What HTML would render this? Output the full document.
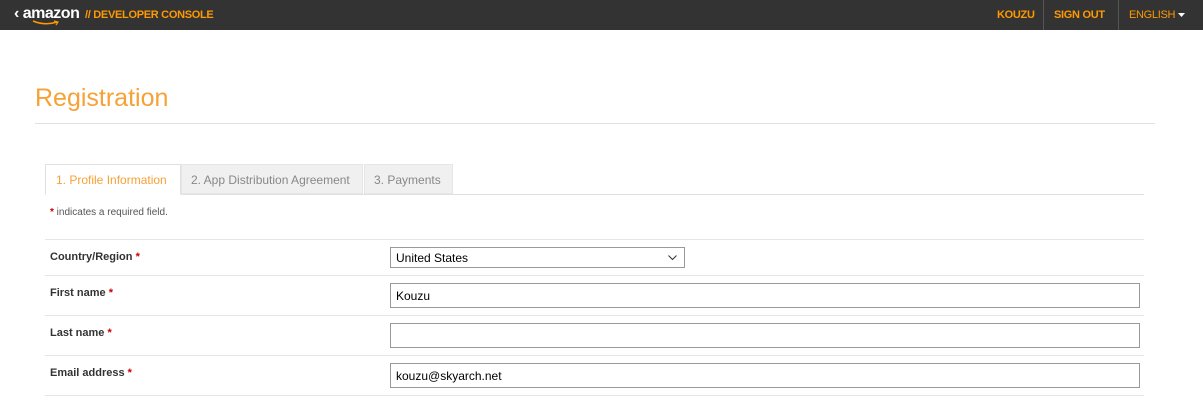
<!DOCTYPE html>
<html><head><style>
*{margin:0;padding:0;box-sizing:border-box}
body{width:1203px;height:401px;background:#fff;font-family:"Liberation Sans",sans-serif;position:relative;overflow:hidden}
.top{position:absolute;left:0;top:0;width:1203px;height:30px;background:#333}
.a{position:absolute;color:#f90;font-weight:bold;font-size:11px;top:9px;letter-spacing:-0.3px}
.sep{position:absolute;top:0;width:1px;height:30px;background:#555}
.lab{position:absolute;left:50px;font-size:11px;font-weight:bold;color:#333}
.lab b{color:#c00}
.line{position:absolute;left:45px;width:1099px;height:1px;background:#e6e6e6}
.inp{position:absolute;left:390px;width:750px;height:25px;border:1px solid #999;font-size:12px;padding:5px 0 0 5px;color:#000}
</style></head><body>
<div class="top">
<div style="position:absolute;left:14px;top:5px;color:#fff;font-size:16px;font-weight:bold;letter-spacing:-0.5px">‹ amazon</div>
<svg style="position:absolute;left:32px;top:20px" width="28" height="6"><path d="M1 1 Q13 6 25 2" stroke="#f90" stroke-width="1.5" fill="none"/><path d="M22 1 L26 2 L24 5" stroke="#f90" stroke-width="1.2" fill="none"/></svg>
<div class="a" style="left:85px">// DEVELOPER CONSOLE</div>
<div class="a" style="left:997px">KOUZU</div>
<div class="sep" style="left:1043px"></div>
<div class="a" style="left:1054px">SIGN OUT</div>
<div class="sep" style="left:1118px"></div>
<div class="a" style="left:1129px;font-weight:normal">ENGLISH</div>
<svg style="position:absolute;left:1178px;top:13px" width="7" height="4"><path d="M0 0H7L3.5 4Z" fill="#fff"/></svg>
</div>
<div style="position:absolute;left:35px;top:84px;font-size:25px;color:#f7a136">Registration</div>
<div style="position:absolute;left:35px;top:123px;width:1120px;height:1px;background:#e0e0e0"></div>
<div style="position:absolute;left:45px;top:194px;width:1099px;height:1px;background:#e0e0e0"></div>
<div style="position:absolute;left:45px;top:164px;width:136px;height:31px;border:1px solid #e0e0e0;border-bottom:1px solid #fff;background:#fff;color:#f7a136;font-size:12px;padding:8px 0 0 10px">1. Profile Information</div>
<div style="position:absolute;left:181px;top:164px;width:182px;height:30px;background:#f0f0f0;border:1px solid #e6e6e6;color:#888;font-size:12px;padding:8px 0 0 9px">2. App Distribution Agreement</div>
<div style="position:absolute;left:364px;top:164px;width:89px;height:30px;background:#f0f0f0;border:1px solid #e6e6e6;color:#888;font-size:12px;padding:8px 0 0 9px">3. Payments</div>
<div style="position:absolute;left:50px;top:207px;font-size:10px;color:#555"><span style="color:#c00;font-weight:bold">*</span> indicates a required field.</div>
<div class="line" style="top:239px"></div>
<div class="lab" style="top:251px">Country/Region <b>*</b></div>
<div class="inp" style="width:295px;height:21px;top:247px;padding-top:3px">United States
<svg style="position:absolute;right:7px;top:7px" width="9" height="6"><path d="M0.5 0.5L4.5 4.5L8.5 0.5" stroke="#333" fill="none"/></svg></div>
<div class="line" style="top:275px"></div>
<div class="lab" style="top:287px">First name <b>*</b></div>
<div class="inp" style="top:283px">Kouzu</div>
<div class="line" style="top:315px"></div>
<div class="lab" style="top:327px">Last name <b>*</b></div>
<div class="inp" style="top:323px"></div>
<div class="line" style="top:355px"></div>
<div class="lab" style="top:367px">Email address <b>*</b></div>
<div class="inp" style="top:363px">kouzu@skyarch.net</div>
<div class="line" style="top:395px"></div>
</body></html>
